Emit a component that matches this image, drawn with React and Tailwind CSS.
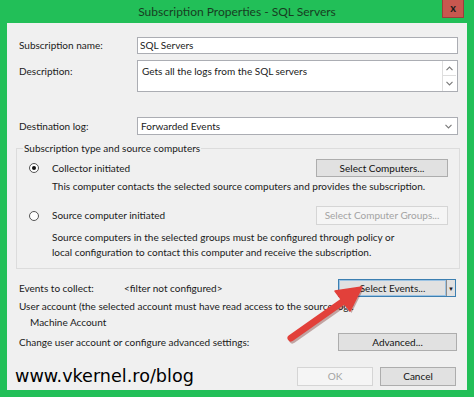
const ui = { fontFamily: '"Segoe UI", Lato, "Liberation Sans", sans-serif' }

function Btn({ children, className = '', disabled = false }) {
  return (
    <div
      className={`flex items-center justify-center border ${
        disabled
          ? 'border-[#d5d5d5] bg-[#f5f5f5] text-[#a3a3a3]'
          : 'border-[#adadad] bg-[#e1e1e1] text-[#111]'
      } ${className}`}
    >
      {children}
    </div>
  )
}

function Radio({ checked }) {
  return (
    <div className="w-[10px] h-[10px] rounded-full border border-[#555] bg-white flex items-center justify-center shrink-0">
      {checked && <div className="w-[4px] h-[4px] rounded-full bg-[#111]" />}
    </div>
  )
}

function Chevron({ up }) {
  return (
    <svg width="7" height="5" viewBox="0 0 7 5">
      <path
        d={up ? 'M0.5 4.2 L3.5 1 L6.5 4.2' : 'M0.5 0.8 L3.5 4 L6.5 0.8'}
        fill="none"
        stroke="#7a7a7a"
        strokeWidth="1.1"
      />
    </svg>
  )
}

export default function App() {
  return (
    <div
      className="relative w-[474px] h-[397px] bg-[#22bf58] flex flex-col text-[10px] text-[#1a1a1a] overflow-hidden"
      style={ui}
    >
      {/* title bar */}
      <div className="h-[23px] flex items-start">
        <div className="flex-1 pl-[32px] h-[24px] flex items-center justify-center text-[12px] text-[#173d22]">
          Subscription Properties - SQL Servers
        </div>
        <div className="w-[22px] h-[18px] mr-[10px] bg-[#c9574f] border border-[#9c3f3a] border-t-0 flex items-center justify-center text-[11px] font-bold text-[#1c1c1c]">
          x
        </div>
      </div>

      {/* client area */}
      <div className="mx-[7px] h-[367px] bg-[#f0f0f0] pl-[12px] pr-[9px] pt-[14px] flex flex-col">
        <div className="flex items-center h-[17px]">
          <div className="w-[118px]">Subscription name:</div>
          <div className="flex-1 h-[17px] border border-[#abadb3] bg-white flex items-center pl-[2px]">
            SQL Servers
          </div>
        </div>

        <div className="flex items-start mt-[6px]">
          <div className="w-[118px] pt-[4px]">Description:</div>
          <div className="flex-1 h-[32px] border border-[#abadb3] bg-white flex">
            <div className="flex-1 pl-[4px] pt-[3px]">Gets all the logs from the SQL servers</div>
            <div className="w-[14px] flex flex-col mr-[1px]">
              <div className="h-[15px] flex items-center justify-center border-l border-b border-[#dedede]">
                <Chevron up />
              </div>
              <div className="flex-1 flex items-center justify-center border-l border-[#dedede]">
                <Chevron />
              </div>
            </div>
          </div>
        </div>

        <div className="flex items-center mt-[25px] h-[18px]">
          <div className="w-[118px]">Destination log:</div>
          <div className="flex-1 h-[18px] border border-[#abadb3] bg-white flex items-center pl-[3px] pr-[5px]">
            <span className="flex-1">Forwarded Events</span>
            <Chevron />
          </div>
        </div>

        {/* group box */}
        <div className="mt-[13px] -ml-[3px] -mr-[2px] h-[121px] border border-[#dcdcdc] flex flex-col pl-[12px] pr-[11px]">
          <div className="-mt-[7px] -ml-[6px] h-[13px] leading-[13px] px-[1px] w-fit bg-[#f0f0f0]">
            Subscription type and source computers
          </div>
          <div className="flex items-center h-[18px] mt-[4px] gap-[13px]">
            <Radio checked />
            <span className="flex-1">Collector initiated</span>
            <Btn className="w-[132px] h-[18px]">Select Computers...</Btn>
          </div>
          <div className="h-[14px] leading-[14px] mt-[2px] pl-[23px]">
            This computer contacts the selected source computers and provides the subscription.
          </div>
          <div className="flex items-center h-[19px] mt-[13px] gap-[13px]">
            <Radio />
            <span className="flex-1">Source computer initiated</span>
            <Btn disabled className="w-[132px] h-[19px]">Select Computer Groups...</Btn>
          </div>
          <div className="mt-[5px] pl-[23px] leading-[15px]">
            Source computers in the selected groups must be configured through policy or
            <br />
            local configuration to contact this computer and receive the subscription.
          </div>
        </div>

        <div className="flex items-center h-[18px] mt-[10px] pr-[2px]">
          <div className="w-[105px]">Events to collect:</div>
          <div className="flex-1">&lt;filter not configured&gt;</div>
          <div className="flex h-[18px] w-[118px] border border-[#3c7fb1] bg-[#e1e1e1]">
            <div className="flex-1 flex items-center justify-center border border-[#9cc3e3]">
              Select Events...
            </div>
            <div className="w-[9px] border-l border-[#8a8a8a] flex items-center justify-center text-[6px]">
              ▼
            </div>
          </div>
        </div>

        <div className="h-[14px] leading-[14px] mt-[2px] whitespace-nowrap">
          User account (the selected account must have read access to the source log):
        </div>
        <div className="h-[14px] leading-[14px] mt-[2px] pl-[11px]">Machine Account</div>

        <div className="flex items-center h-[18px] mt-[4px] pr-[1px]">
          <div className="flex-1">Change user account or configure advanced settings:</div>
          <Btn className="w-[119px] h-[18px]">Advanced...</Btn>
        </div>

        <div className="flex items-center h-[19px] mt-[16px] pr-[2px] gap-[7px]">
          <div
            className="flex-1 -ml-[4px] text-[17.6px] text-black leading-none"
            style={{ fontFamily: '"DejaVu Sans", Verdana, sans-serif' }}
          >
            www.vkernel.ro/blog
          </div>
          <Btn disabled className="w-[76px] h-[19px]">OK</Btn>
          <Btn className="w-[76px] h-[19px]">Cancel</Btn>
        </div>
      </div>

      {/* red annotation arrow */}
      <svg
        className="absolute inset-0 pointer-events-none"
        width="474"
        height="397"
        viewBox="0 0 474 397"
      >
        <g opacity="0.35" transform="translate(1.5 2)">
          <line x1="291" y1="338" x2="345" y2="300" stroke="#6b1a14" strokeWidth="7" strokeLinecap="round" />
          <polygon points="362,287 350,311 335,291" fill="#6b1a14" />
        </g>
        <line x1="291" y1="338" x2="345" y2="300" stroke="#e2403a" strokeWidth="7" strokeLinecap="round" />
        <polygon points="362,287 350,311 335,291" fill="#e2403a" stroke="#e2403a" strokeWidth="1.5" strokeLinejoin="round" />
      </svg>
    </div>
  )
}
